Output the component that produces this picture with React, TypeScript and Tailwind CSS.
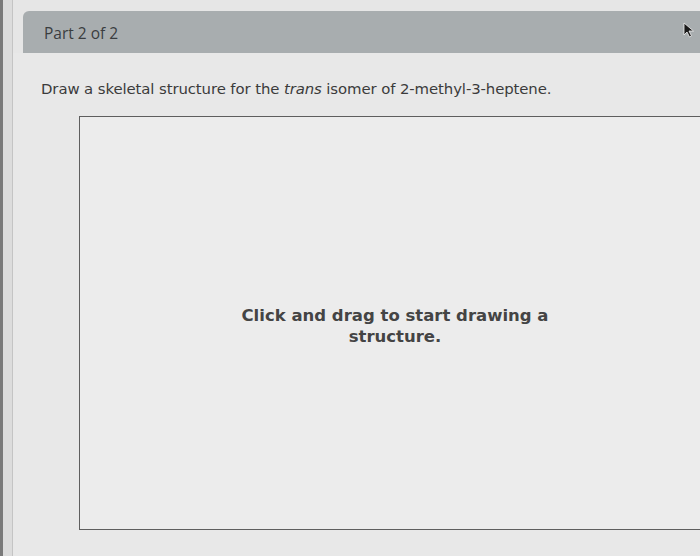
import React from 'react';

function Cursor() {
  return (
    <svg width="12" height="16" viewBox="0 0 12 16" className="absolute right-[5px] top-[11px]">
      <path d="M1 1 L1 13 L4 10 L6.5 15 L8.5 14 L6 9 L10.5 9 Z" fill="#1a1a1a" stroke="#f2f2f2" strokeWidth="0.8" />
    </svg>
  );
}

export default function App() {
  return (
    <div
      className="relative w-[700px] h-[556px] overflow-hidden bg-[#dedede] flex"
      style={{ fontFamily: '"DejaVu Sans", Verdana, sans-serif' }}
    >
      <div className="w-[3px] bg-[#7a7a7a] shrink-0" />
      <div className="w-[9px] bg-[#dcdcdc] shrink-0" />
      <div className="flex-1 flex flex-col border-l border-[#c4c4c4] bg-[#e6e6e6] pt-[11px]">
        <div className="ml-[10px] h-[42px] bg-[#a8adaf] rounded-tl-[6px] flex items-center pl-[21px] pt-[4px] relative">
          <span
            className="text-[15.5px] text-[#3a3d3f]"
            style={{ fontFamily: '"Open Sans", "Noto Sans", sans-serif' }}
          >
            Part 2 of 2
          </span>
          <Cursor />
        </div>
        <div className="flex-1 flex flex-col bg-[#e8e8e8]">
          <p className="ml-[28px] mt-[25px] text-[14.9px] text-[#3b3b3b] tracking-[-0.1px]">
            Draw a skeletal structure for the <i>trans</i> isomer of 2-methyl-3-heptene.
          </p>
          <div className="ml-[66px] mt-[16px] h-[414px] border-l border-t border-b border-[#5e5e5e] bg-[#ececec] flex items-center justify-center">
            <div className="text-center text-[16.5px] font-bold text-[#444444] leading-[21px] ml-[10px] mb-[-6px] w-[340px]">
              Click and drag to start drawing a structure.
            </div>
          </div>
        </div>
      </div>
    </div>
  );
}
